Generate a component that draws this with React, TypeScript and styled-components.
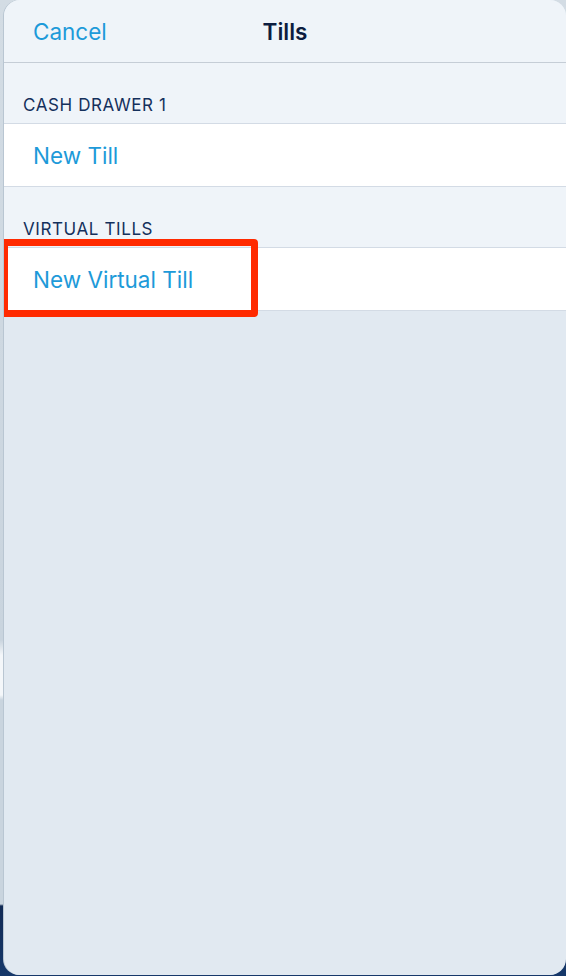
import React from "react";
import styled, { createGlobalStyle } from "styled-components";

const GlobalStyle = createGlobalStyle`
  html, body {
    margin: 0;
    padding: 0;
    height: 100%;
  }
  body {
    font-family: Inter, "Liberation Sans", Arial, sans-serif;
    -webkit-font-smoothing: antialiased;
  }
`;

const Backdrop = styled.div`
  min-height: 976px;
  display: flex;
  padding-left: 4px;
  background: linear-gradient(
    to bottom,
    #d3dce4 0px,
    #c9d4de 640px,
    #f4f7fa 655px,
    #f4f7fa 695px,
    #c9d4de 700px,
    #c9d4de 904px,
    #112a55 906px,
    #16386a 976px
  );
`;

const Panel = styled.div`
  flex: 1;
  height: 975px;
  display: flex;
  flex-direction: column;
  background: #e1e9f1;
  border-radius: 16px;
  overflow: hidden;
  box-shadow: -1px 0 0 #b9c6d2;
`;

const NavBar = styled.header`
  height: 62px;
  flex-shrink: 0;
  display: grid;
  grid-template-columns: 1fr auto 1fr;
  align-items: center;
  padding: 0 29px;
  background: #eff4f9;
  border-bottom: 1px solid #c5cdd6;
`;

const NavButton = styled.button`
  justify-self: start;
  border: none;
  background: none;
  padding: 0;
  font: inherit;
  font-size: 22.5px;
  color: #1d9ad9;
  cursor: pointer;
`;

const Title = styled.h1`
  margin: 0;
  font-size: 22.5px;
  font-weight: 600;
  color: #0c1d40;
`;

const SectionHeader = styled.div`
  height: 60px;
  display: flex;
  align-items: flex-end;
  padding: 0 19px 8px;
  box-sizing: border-box;
  background: #eff4f9;
  font-size: 17px;
  letter-spacing: 0.6px;
  color: #14305c;
  text-transform: uppercase;
`;

const RowWrap = styled.div`
  position: relative;
`;

const Row = styled.div`
  height: 62px;
  display: flex;
  align-items: center;
  padding: 0 29px;
  background: #ffffff;
  border-top: 1px solid #d3dbe5;
  border-bottom: 1px solid #d3dbe5;
  font-size: 22.5px;
  color: #1d9ad9;
`;

const Highlight = styled.div`
  position: absolute;
  top: -8px;
  left: -3px;
  width: 257px;
  height: 78px;
  box-sizing: border-box;
  border: 7px solid #ff2a00;
  border-radius: 4px;
  pointer-events: none;
`;

const Section = styled.section`
  display: flex;
  flex-direction: column;
`;

type Group = { title: string; rows: string[]; highlight?: boolean };

const groups: Group[] = [
  { title: "Cash Drawer 1", rows: ["New Till"] },
  { title: "Virtual Tills", rows: ["New Virtual Till"], highlight: true },
];

export default function App() {
  return (
    <>
      <GlobalStyle />
      <Backdrop>
        <Panel>
          <NavBar>
            <NavButton>Cancel</NavButton>
            <Title>Tills</Title>
            <span />
          </NavBar>
          {groups.map((g) => (
            <Section key={g.title}>
              <SectionHeader>{g.title}</SectionHeader>
              {g.rows.map((r) => (
                <RowWrap key={r}>
                  <Row>{r}</Row>
                  {g.highlight && <Highlight />}
                </RowWrap>
              ))}
            </Section>
          ))}
        </Panel>
      </Backdrop>
    </>
  );
}
